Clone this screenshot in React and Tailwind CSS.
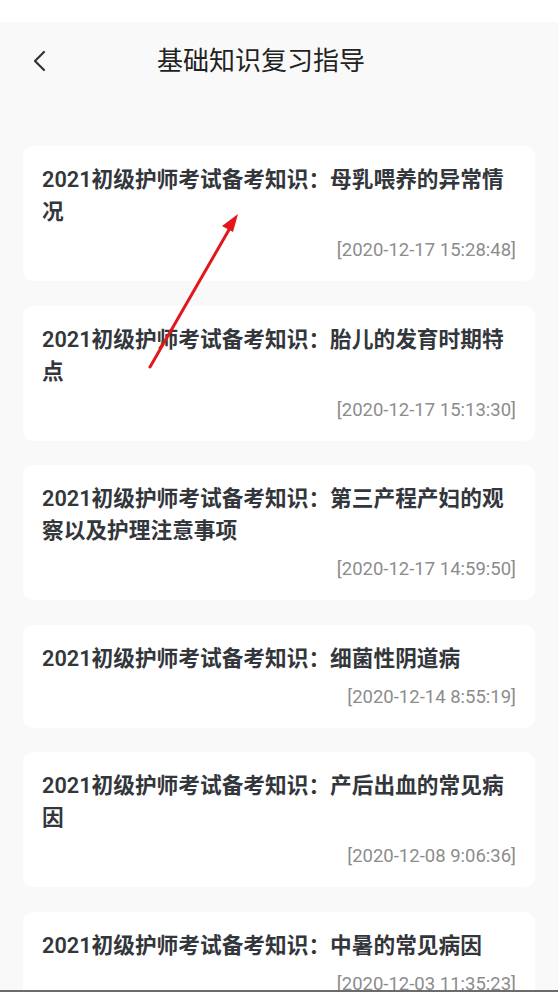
import React from 'react';

const articles = [
    { title: '2021初级护师考试备考知识：母乳喂养的异常情况', date: '[2020-12-17 15:28:48]' },
    { title: '2021初级护师考试备考知识：胎儿的发育时期特点', date: '[2020-12-17 15:13:30]' },
    { title: '2021初级护师考试备考知识：第三产程产妇的观察以及护理注意事项', date: '[2020-12-17 14:59:50]' },
    { title: '2021初级护师考试备考知识：细菌性阴道病', date: '[2020-12-14 8:55:19]' },
    { title: '2021初级护师考试备考知识：产后出血的常见病因', date: '[2020-12-08 9:06:36]' },
    { title: '2021初级护师考试备考知识：中暑的常见病因', date: '[2020-12-03 11:35:23]' },
];

const font = { fontFamily: '"Roboto", "Noto Sans CJK SC", sans-serif' };

export default function App() {
    return (
        <div className="relative h-[992px] overflow-hidden bg-[#f9f9f9]" style={font}>
            <div className="h-[22px] bg-white" />

            {/* header */}
            <div className="relative flex h-[78px] items-center justify-center pr-[36px]">
                <button className="absolute left-[30px] top-[28px] text-[#333]">
                    <svg width="18" height="22" viewBox="0 0 18 22" fill="none" stroke="currentColor" strokeWidth="2.2" strokeLinecap="round" strokeLinejoin="round">
                        <path d="M14 2 L5 11 L14 20" />
                    </svg>
                </button>
                <h1 className="text-[26px] font-normal leading-none text-[#222]">基础知识复习指导</h1>
            </div>

            {/* list */}
            <div className="flex flex-col gap-[24.5px] px-[23px] pt-[46px]">
                {articles.map((a, i) => (
                    <div key={i} className="rounded-[10px] bg-white pl-[19px] pr-[19px] pt-[18px] pb-[19px]">
                        <div className="text-[21.7px] font-semibold leading-[32px] text-[#33363b]">{a.title}</div>
                        <div className="mt-[10px] text-right text-[18.5px] leading-[24px] text-[#8c8c8c]">{a.date}</div>
                    </div>
                ))}
            </div>

            {/* annotation arrow */}
            <svg className="pointer-events-none absolute left-0 top-0" width="558" height="992">
                <line x1="150" y1="367" x2="230" y2="228" stroke="#e3161c" strokeWidth="3" strokeLinecap="round" />
                <polygon points="238,214 222,226 233,232" fill="#e3161c" />
            </svg>

            <div className="absolute bottom-0 left-0 h-[2px] w-full bg-[#6b6b6b]" />
        </div>
    );
}
